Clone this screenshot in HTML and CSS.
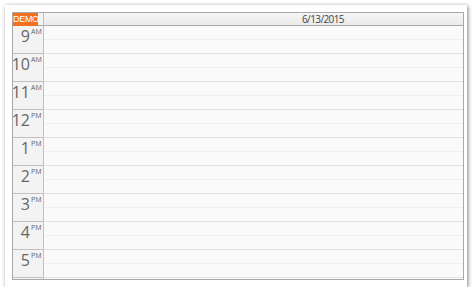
FILE: index.html
```html
<!DOCTYPE html>
<html>
<head>
<meta charset="utf-8">
<link rel="stylesheet" href="styles.css">
</head>
<body>
<div class="frame">
  <div class="cal">
    <div class="corner"><span class="demo">DEMO</span></div>
    <div class="colhead">6/13/2015</div>
    <div class="hours">
      <div class="hour"><span class="num">9</span><span class="ampm">AM</span></div>
      <div class="hour"><span class="num">10</span><span class="ampm">AM</span></div>
      <div class="hour"><span class="num">11</span><span class="ampm">AM</span></div>
      <div class="hour"><span class="num">12</span><span class="ampm">PM</span></div>
      <div class="hour"><span class="num">1</span><span class="ampm">PM</span></div>
      <div class="hour"><span class="num">2</span><span class="ampm">PM</span></div>
      <div class="hour"><span class="num">3</span><span class="ampm">PM</span></div>
      <div class="hour"><span class="num">4</span><span class="ampm">PM</span></div>
      <div class="hour"><span class="num">5</span><span class="ampm">PM</span></div>
    </div>
    <div class="cells">
      <div class="cell half"></div><div class="cell"></div>
      <div class="cell half"></div><div class="cell"></div>
      <div class="cell half"></div><div class="cell"></div>
      <div class="cell half"></div><div class="cell"></div>
      <div class="cell half"></div><div class="cell"></div>
      <div class="cell half"></div><div class="cell"></div>
      <div class="cell half"></div><div class="cell"></div>
      <div class="cell half"></div><div class="cell"></div>
      <div class="cell half"></div><div class="cell"></div>
    </div>
  </div>
</div>
</body>
</html>
```
FILE: styles.css
```css
html, body {
  margin: 0;
  padding: 0;
  background: #ffffff;
}
body {
  font-family: "Open Sans", "DejaVu Sans", sans-serif;
}
.frame {
  margin: 5px 0 0 5px;
  width: 462px;
  height: 282px;
  box-sizing: border-box;
  padding: 7px 0 0 7px;
  background: #fff;
  box-shadow: 1px 1px 4px rgba(0, 0, 0, 0.5);
}
.cal {
  width: 452px;
  height: 268px;
  box-sizing: border-box;
  border: 1px solid #a8a8a8;
  display: grid;
  grid-template-columns: 31px 1fr;
  grid-template-rows: 13px 1fr;
}
.corner {
  background: #f3f3f3;
  border-right: 1px solid #c0c0c0;
  border-bottom: 1px solid #a8a8a8;
  display: flex;
}
.demo {
  width: 25px;
  height: 13px;
  background: #f37021;
  color: #fff;
  font-family: "Liberation Sans", Arial, sans-serif;
  font-size: 9px;
  line-height: 13px;
  text-align: center;
  letter-spacing: -0.3px;
  white-space: nowrap;
}
.colhead {
  background: linear-gradient(#f5f5f5, #ebebeb);
  border-bottom: 1px solid #a8a8a8;
  font-size: 10px;
  line-height: 13px;
  color: #444;
  letter-spacing: -0.6px;
  padding-left: 258px;
}
.hours {
  background: #f3f3f3;
  border-right: 1px solid #c0c0c0;
  display: flex;
  flex-direction: column;
}
.hour {
  height: 28px;
  box-sizing: border-box;
  border-bottom: 1px solid #c0c0c0;
  display: flex;
  justify-content: flex-end;
  padding-right: 2px;
  color: #666;
}
.num {
  font-size: 16px;
  line-height: 20px;
}
.ampm {
  font-size: 7px;
  line-height: 12px;
  margin-left: 1px;
  width: 10px;
}
.cells {
  background: #fafafa;
  display: flex;
  flex-direction: column;
}
.cell {
  height: 14px;
  box-sizing: border-box;
  border-bottom: 1px solid #e2e2e2;
}
.cell.half {
  border-bottom: 1px solid #efefef;
}
```
